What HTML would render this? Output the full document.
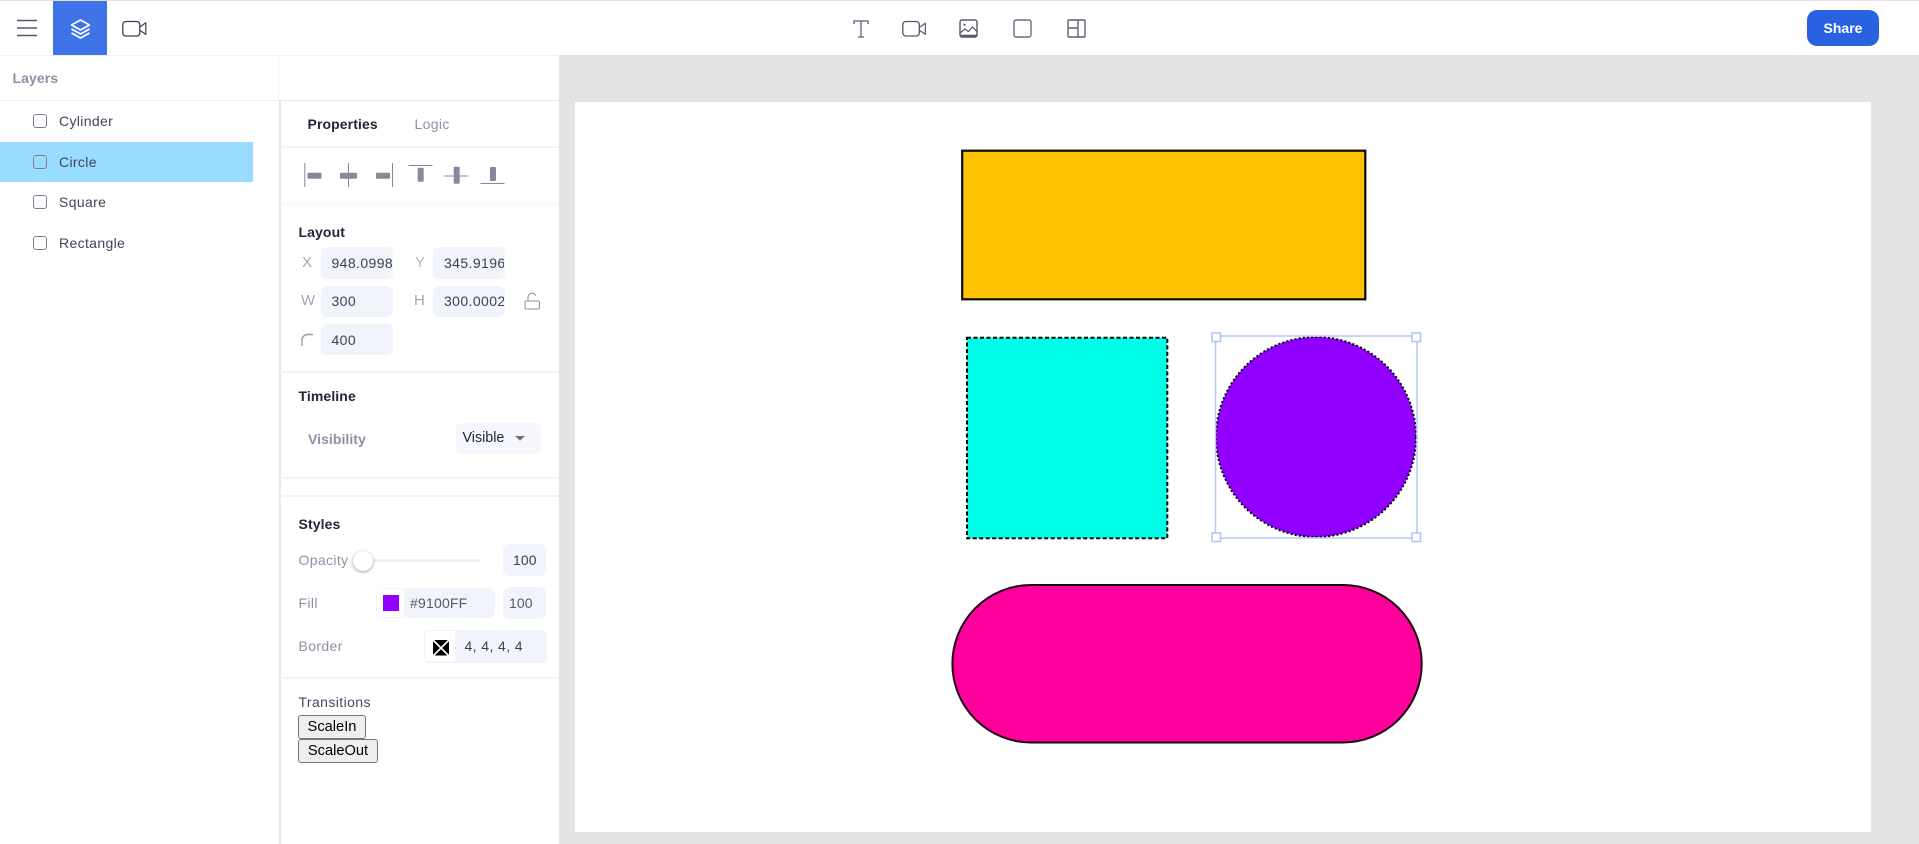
<!DOCTYPE html>
<html lang="en">
<head>
<meta charset="utf-8">
<title>Editor</title>
<style>
html,body{margin:0;padding:0;width:1919px;height:844px;overflow:hidden;background:#fff;}
body{position:relative;font-family:"Liberation Sans",Arial,sans-serif;font-size:14px;color:#3c3f55;}
div,span{position:absolute;box-sizing:border-box;}
.t{line-height:20px;height:20px;white-space:nowrap;}
.h{font-weight:700;color:#23263a;letter-spacing:.1px;}
.g{color:#8d90a5;letter-spacing:.35px;}
.l{color:#3f4358;letter-spacing:.35px;left:59px;}
.i{background:#f1f4fb;border-radius:6px;overflow:hidden;}
.v{color:#3c3f55;letter-spacing:.4px;line-height:20px;height:20px;white-space:nowrap;}
.c{overflow:hidden;width:61px;}
.cb{left:33px;width:14px;height:14px;border:1.5px solid #7b7e90;border-radius:3px;}
.dv{left:280px;width:279px;height:2px;background:#f2f3f6;}
.b{left:298px;background:#efefef;border:1px solid #767676;border-radius:3px;font-size:14.67px;color:#000;line-height:23px;text-align:center;height:24px;}
svg{position:absolute;left:0;top:0;}
</style>
</head>
<body>
<!-- canvas background -->
<div style="left:559px;top:55px;width:1360px;height:789px;background:#e3e3e3"></div>
<div style="left:575px;top:102px;width:1296px;height:730px;background:#fff"></div>

<!-- header -->
<div style="left:0;top:0;width:1919px;height:55px;background:#fff;border-top:1px solid #e2e2e2"></div>
<div style="left:53px;top:1px;width:54px;height:54px;background:#3f74e8"></div>
<div style="left:0;top:55px;width:559px;height:1px;background:#f0f1f5"></div>

<!-- left panel lines -->
<div style="left:0;top:100px;width:279px;height:1px;background:#f0f3fa"></div>
<div style="left:278px;top:56px;width:1px;height:44px;background:#f1f3f8"></div>
<div style="left:279px;top:100px;width:280px;height:1px;background:#e4e6ee"></div>
<div style="left:279px;top:100px;width:1.5px;height:744px;background:#e6e8ef"></div>

<!-- layers -->
<div class="t" style="left:12.5px;top:68px;color:#8d90a5;font-weight:700;letter-spacing:.1px">Layers</div>
<div style="left:0;top:142px;width:253px;height:40px;background:#99dcff"></div>
<div class="cb" style="top:114px"></div>
<div class="cb" style="top:155px"></div>
<div class="cb" style="top:195px"></div>
<div class="cb" style="top:236px"></div>
<div class="t l" style="top:111px">Cylinder</div>
<div class="t l" style="top:152px">Circle</div>
<div class="t l" style="top:192px">Square</div>
<div class="t l" style="top:233px">Rectangle</div>

<!-- tabs -->
<div class="t h" style="left:307.5px;top:114px">Properties</div>
<div class="t g" style="left:414.5px;top:114px">Logic</div>
<div class="dv" style="top:146px"></div>
<div class="dv" style="top:202px;height:1px"></div>
<div class="dv" style="top:204px;height:1px"></div>

<!-- layout -->
<div class="t h" style="left:298.5px;top:222px">Layout</div>
<div class="t" style="left:302px;top:253px;color:#a3a6b7;font-size:15px">X</div>
<div class="t" style="left:415px;top:253px;color:#b4b7c6;font-size:15px">Y</div>
<div class="t" style="left:301px;top:291px;color:#a3a6b7;font-size:15px">W</div>
<div class="t" style="left:414px;top:291px;color:#a3a6b7;font-size:15px">H</div>
<div class="i" style="left:321px;top:247px;width:72px;height:32px"><span class="v c" style="left:10.5px;top:6px">948.0998</span></div>
<div class="i" style="left:433px;top:247px;width:72px;height:32px"><span class="v c" style="left:11px;top:6px;width:60px">345.9196</span></div>
<div class="i" style="left:321px;top:286px;width:72px;height:31px"><span class="v" style="left:10.5px;top:5px">300</span></div>
<div class="i" style="left:433px;top:286px;width:72px;height:31px"><span class="v c" style="left:11px;top:5px;width:60px">300.0002</span></div>
<div class="i" style="left:321px;top:324px;width:72px;height:31px"><span class="v" style="left:10.5px;top:6px">400</span></div>

<!-- timeline -->
<div class="dv" style="top:371px"></div>
<div class="t h" style="left:298.5px;top:386px">Timeline</div>
<div class="t" style="left:308px;top:429px;color:#8d90a5;font-weight:700;letter-spacing:.05px">Visibility</div>
<div style="left:456px;top:423px;width:85px;height:31px;background:#f5f7fd;border-radius:6px"></div>
<div class="t" style="left:462.5px;top:428px;color:#23263a;font-size:14.3px">Visible</div>
<div class="dv" style="top:477px"></div>
<div class="dv" style="top:495px"></div>

<!-- styles -->
<div class="t h" style="left:298.5px;top:514px">Styles</div>
<div class="t g" style="left:298.5px;top:550px">Opacity</div>
<div style="left:363px;top:558.5px;width:118px;height:3px;background:#f0f0fa;border-radius:2px"></div>
<div style="left:353px;top:551px;width:20px;height:20px;border-radius:50%;background:#fff;box-shadow:0 1px 3px rgba(0,0,0,.4)"></div>
<div class="i" style="left:503px;top:544px;width:43px;height:32px"><span class="v" style="left:10px;top:6px;letter-spacing:.1px">100</span></div>

<div class="t g" style="left:298.5px;top:593px">Fill</div>
<div class="i" style="left:376px;top:588px;width:119px;height:30px"><span style="left:1px;top:1px;width:27px;height:28px;background:#fff"></span><span style="left:7px;top:7px;width:15.5px;height:15.5px;background:#9100ff"></span><span class="v" style="left:34px;top:5px;color:#55586b;letter-spacing:.2px">#9100FF</span></div>
<div class="i" style="left:503px;top:587px;width:43px;height:32px"><span class="v" style="left:6px;top:6px;color:#55586b;letter-spacing:.1px">100</span></div>

<div class="t g" style="left:298.5px;top:636px">Border</div>
<div class="i" style="left:424px;top:630px;width:123px;height:33px;border:1.5px solid #eef2fb"><span style="left:0;top:0;width:30px;height:30px;background:#fff"></span><span class="v" style="left:39.5px;top:5px;letter-spacing:.4px">4, 4, 4, 4</span></div>

<div class="dv" style="top:677px"></div>
<div class="t" style="left:298.5px;top:692px;color:#3f4a62;letter-spacing:.4px">Transitions</div>
<div class="b" style="top:715px;width:68px">ScaleIn</div>
<div class="b" style="top:739px;width:80px">ScaleOut</div>

<!-- share -->
<div style="left:1807px;top:10px;width:72px;height:36px;background:#2962e0;border-radius:10px;color:#fff;font-weight:700;font-size:14px;line-height:36px;text-align:center">Share</div>

<!-- all icons + shapes -->
<svg width="1919" height="844" viewBox="0 0 1919 844" fill="none">
  <!-- hamburger -->
  <path d="M17 20.5h20M17 28h20M17 35.5h20" stroke="#55586b" stroke-width="1.4"/>
  <!-- layers -->
  <path d="M80.5 20l9 5-9 5-9-5z" stroke="#fff" stroke-width="1.6" stroke-linejoin="round"/>
  <path d="M71.5 29l9 5 9-5M71.5 33l9 5 9-5" stroke="#fff" stroke-width="1.6" stroke-linejoin="round"/>
  <!-- video left -->
  <rect x="122.8" y="21.5" width="17" height="14.5" rx="3" stroke="#3d4050" stroke-width="1.3"/>
  <path d="M139.8 27l6-4.2v11.6l-6-4.2" stroke="#3d4050" stroke-width="1.2" stroke-linejoin="round"/>

  <!-- top centre icons -->
  <path d="M854 24v-3h14v3M861 21v16M858 37h6" stroke="#75778a" stroke-width="1.5"/>
  <rect x="902.8" y="21.5" width="16.5" height="14.5" rx="3" stroke="#55576b" stroke-width="1.3"/>
  <path d="M919.3 27.5l6-4.2v11l-6-4.2" stroke="#55576b" stroke-width="1.2" stroke-linejoin="round"/>
  <rect x="960" y="20" width="17" height="17" rx="2" stroke="#55576b" stroke-width="1.4"/>
  <circle cx="964.5" cy="24.8" r="1.1" fill="#55576b"/>
  <path d="M960 33l5-4 3.5 2.5 4-4.5 5 5" stroke="#55576b" stroke-width="1.2" stroke-linejoin="round"/>
  <path d="M960 35.8h17" stroke="#55576b" stroke-width="2"/>
  <rect x="1014" y="20" width="17" height="17" rx="2" stroke="#6b6d80" stroke-width="1.4"/>
  <rect x="1068" y="20" width="17" height="17" rx="1" stroke="#5f6175" stroke-width="1.4"/>
  <path d="M1078 20v17M1068 28h10" stroke="#5f6175" stroke-width="1.4"/>

  <!-- align icons -->
  <g fill="#858999">
    <rect x="304.3" y="163" width="1" height="24"/><rect x="307.5" y="172.7" width="14" height="6" rx="1"/>
    <rect x="348" y="163" width="1" height="24"/><rect x="340" y="172.7" width="17" height="6" rx="1"/>
    <rect x="392" y="163" width="1" height="24"/><rect x="376" y="172.7" width="14" height="6" rx="1"/>
    <rect x="408.5" y="165" width="24" height="1"/><rect x="417.7" y="167.7" width="6" height="14" rx="1"/>
    <rect x="444.5" y="175.5" width="24" height="1"/><rect x="453.7" y="166.7" width="6" height="17" rx="1"/>
    <rect x="480.5" y="183" width="24" height="1"/><rect x="490" y="167" width="6" height="14" rx="1"/>
  </g>
  <!-- lock -->
  <rect x="525" y="301" width="14.5" height="8" rx="1.5" stroke="#8b8e9f" stroke-width="1"/>
  <path d="M528 301v-3.5a4.2 4.2 0 0 1 8-1.8" stroke="#8b8e9f" stroke-width="1"/>
  <!-- corner -->
  <path d="M302 346v-6a5.5 5.5 0 0 1 5.5-5.5h5.5" stroke="#9a9db0" stroke-width="1.4"/>
  <!-- select arrow -->
  <path d="M515 436h10l-5 4.8z" fill="#6f7280"/>
  <!-- border icon -->
  <rect x="433" y="640" width="16" height="15.5" fill="#000"/>
  <path d="M431 638l20 20M451 638l-20 20" stroke="#fff" stroke-width="1.6"/>

  <!-- rectangle -->
  <rect x="962.2" y="150.7" width="403.1" height="148.6" fill="#ffc200" stroke="#0b0b0b" stroke-width="2.2"/>
  <!-- square -->
  <rect x="967" y="337.7" width="200.3" height="200.6" fill="#00ffe8" stroke="#000" stroke-width="2" stroke-dasharray="4 2.5"/>
  <!-- circle -->
  <circle cx="1316" cy="437" r="100" fill="#9100ff" stroke="#000" stroke-width="2" stroke-dasharray="2 2.2"/>
  <!-- selection -->
  <rect x="1215.5" y="336" width="201.5" height="202" stroke="#b4c8f8" stroke-width="1.5"/>
  <g fill="#fff" stroke="#aec3f8" stroke-width="1.5">
    <rect x="1212" y="333" width="8.5" height="8.5"/>
    <rect x="1412" y="333" width="8.5" height="8.5"/>
    <rect x="1212" y="533" width="8.5" height="8.5"/>
    <rect x="1412" y="533" width="8.5" height="8.5"/>
  </g>
  <!-- pill -->
  <rect x="952.4" y="585" width="469.3" height="157.5" rx="78.7" fill="#ff009c" stroke="#1c0012" stroke-width="2"/>
</svg>
</body>
</html>
